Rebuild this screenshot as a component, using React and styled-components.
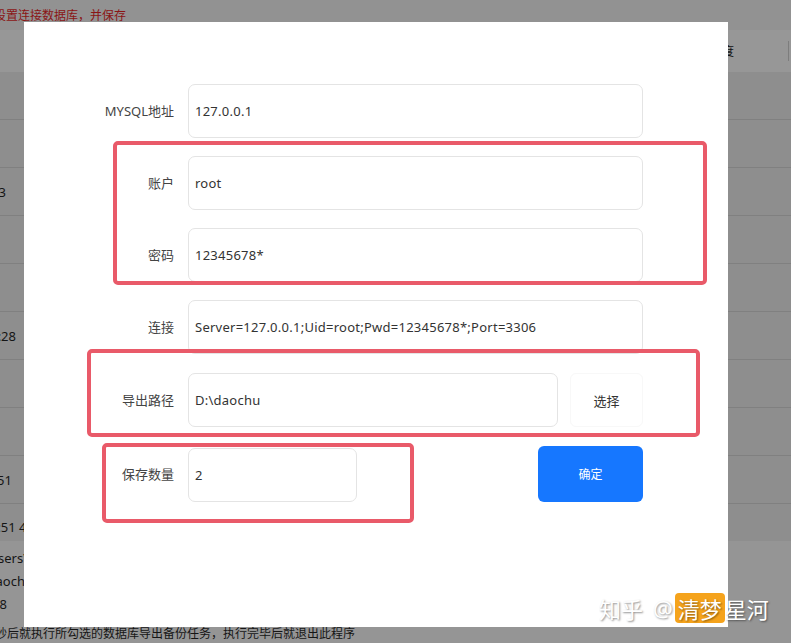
import React from "react";
import styled, { createGlobalStyle } from "styled-components";

const GlobalStyle = createGlobalStyle`
  html, body { margin: 0; padding: 0; }
  body {
    width: 791px;
    height: 643px;
    overflow: hidden;
    background: #8e8e8e;
    font-family: "Noto Sans", "Noto Sans CJK SC", sans-serif;
  }
`;

const Page = styled.div`
  position: relative;
  width: 791px;
  height: 643px;
  overflow: hidden;
  background: #8e8e8e;
  color: #151515;
  font-family: "Noto Sans", "Noto Sans CJK SC", sans-serif;
`;

const TopBar = styled.div`
  height: 30px;
  background: #929292;
  display: flex;
  align-items: center;
  font-size: 12px;
  color: #8a1515;
  span { margin-left: -6px; }
`;

const TableHeader = styled.div`
  height: 42px;
  background: #979797;
  display: flex;
  align-items: center;
  justify-content: flex-end;
  font-size: 12px;
  color: #111;
`;

const HeaderCell = styled.div`
  margin-right: 54px;
`;

const HeaderDivider = styled.div`
  width: 1px;
  height: 20px;
  background: #7d7d7d;
  margin-right: 2px;
`;

const Row = styled.div`
  height: ${(p) => p.$h || 48}px;
  box-sizing: border-box;
  border-bottom: ${(p) => (p.$noLine ? "none" : "1px solid #808080")};
  display: flex;
  align-items: center;
  padding-top: ${(p) => p.$pt || 0}px;
  font-size: 13px;
  background: #8e8e8e;
`;

const ClipCell = styled.div`
  width: ${(p) => p.$end}px;
  display: flex;
  justify-content: flex-end;
  overflow: hidden;
  white-space: nowrap;
  flex: none;
`;

const Lower = styled.div`
  background: #959595;
  display: flex;
  flex-direction: column;
  padding-top: 5px;
  font-size: 13px;
  height: 102px;
`;

const LowerLine = styled.div`
  height: 23px;
  display: flex;
  align-items: center;
`;

const Notice = styled.div`
  font-size: 12px;
  margin-top: 9px;
  color: #151515;
  white-space: nowrap;
  span { margin-left: -5px; }
`;

const Overlay = styled.div`
  position: absolute;
  inset: 0;
  padding: 22px 0 0 24px;
`;

const Modal = styled.div`
  width: 704px;
  height: 605px;
  background: #fff;
  box-sizing: border-box;
  padding: 62px 85px 0 0;
`;

const Form = styled.div`
  display: grid;
  grid-template-columns: 150px 455px;
  column-gap: 14px;
  row-gap: 18px;
`;

const Label = styled.div`
  height: 54px;
  margin-top: ${(p) => p.$mt || 0}px;
  display: flex;
  align-items: center;
  justify-content: flex-end;
  font-size: 13px;
  color: #444;
  padding-bottom: 1px;
  box-sizing: border-box;
`;

const Field = styled.div`
  display: flex;
  align-items: center;
  gap: 12px;
  margin-top: ${(p) => p.$mt || 0}px;
  justify-content: ${(p) => (p.$spread ? "space-between" : "flex-start")};
`;

const Input = styled.div`
  box-sizing: border-box;
  height: 54px;
  width: ${(p) => (p.$w ? `${p.$w}px` : "auto")};
  flex: ${(p) => (p.$w ? "none" : "1")};
  border: 1.5px solid #e4e4e4;
  border-radius: 7px;
  padding-left: 6px;
  display: flex;
  align-items: center;
  font-size: 13px;
  color: #333;
  letter-spacing: 0.25px;
  white-space: nowrap;
  overflow: hidden;
`;

const GhostButton = styled.div`
  box-sizing: border-box;
  width: 73px;
  height: 54px;
  flex: none;
  border: 1px solid #f8f8f8;
  border-radius: 6px;
  display: flex;
  align-items: center;
  justify-content: center;
  font-size: 13px;
  color: #333;
`;

const PrimaryButton = styled.div`
  box-sizing: border-box;
  width: 105px;
  height: 56px;
  flex: none;
  background: #1677ff;
  border-radius: 6px;
  display: flex;
  align-items: center;
  justify-content: center;
  font-size: 12px;
  color: #fff;
  margin-top: -1px;
`;

const Mark = styled.div`
  position: absolute;
  left: ${(p) => p.$x}px;
  top: ${(p) => p.$y}px;
  width: ${(p) => p.$w}px;
  height: ${(p) => p.$h}px;
  box-sizing: border-box;
  border: 4px solid #e95a69;
  border-radius: 5px;
  pointer-events: none;
`;

const Watermark = styled.div`
  position: absolute;
  left: 599px;
  top: 593px;
  display: flex;
  align-items: center;
  font-size: 22px;
  color: #fff;
  font-family: "Noto Sans CJK SC", sans-serif;
  text-shadow: 1px 1px 2px rgba(0, 0, 0, 0.45);
  white-space: nowrap;
  line-height: 30px;
`;

const WmAt = styled.span`
  margin-left: 10px;
  margin-right: 2px;
  font-family: "Noto Sans", sans-serif;
`;

const WmBadge = styled.span`
  background: #f5a31c;
  border-radius: 4px;
  padding: 0 3px;
`;

const rows = [
  { t: "" },
  { t: "" },
  { t: "2023-04-13", end: 6 },
  { t: "" },
  { t: "" },
  { t: "10:28", end: 16 },
  { t: "" },
  { t: "" },
  { t: "10:51", end: 12 },
];

export default function App() {
  return (
    <Page>
      <GlobalStyle />
      <TopBar>
        <span>设置连接数据库，并保存</span>
      </TopBar>
      <TableHeader>
        <HeaderCell>备份进度</HeaderCell>
        <HeaderDivider />
      </TableHeader>
      {rows.map((r, i) => (
        <Row key={i}>
          {r.t && <ClipCell $end={r.end}>{r.t}</ClipCell>}
        </Row>
      ))}
      <Row $h={37} $pt={8} $noLine>
        <ClipCell $end={34}>2023-04-13 10:51 41</ClipCell>
      </Row>
      <Lower>
        <LowerLine>
          <ClipCell $end={28}>C:\Users\</ClipCell>
        </LowerLine>
        <LowerLine>
          <ClipCell $end={33}>D:\daochu</ClipCell>
        </LowerLine>
        <LowerLine>
          <ClipCell $end={7}>8</ClipCell>
        </LowerLine>
        <Notice>
          <span>秒后就执行所勾选的数据库导出备份任务，执行完毕后就退出此程序</span>
        </Notice>
      </Lower>

      <Overlay>
        <Modal>
          <Form>
            <Label>MYSQL地址</Label>
            <Field>
              <Input>127.0.0.1</Input>
            </Field>
            <Label>账户</Label>
            <Field>
              <Input>root</Input>
            </Field>
            <Label>密码</Label>
            <Field>
              <Input>12345678*</Input>
            </Field>
            <Label>连接</Label>
            <Field>
              <Input>Server=127.0.0.1;Uid=root;Pwd=12345678*;Port=3306</Input>
            </Field>
            <Label $mt={1}>导出路径</Label>
            <Field $mt={1}>
              <Input>D:\daochu</Input>
              <GhostButton>选择</GhostButton>
            </Field>
            <Label $mt={2}>保存数量</Label>
            <Field $mt={2} $spread>
              <Input $w={169}>2</Input>
              <PrimaryButton>确定</PrimaryButton>
            </Field>
          </Form>
        </Modal>
      </Overlay>

      <Mark $x={113} $y={141} $w={594} $h={144} />
      <Mark $x={87} $y={349} $w={613} $h={88} />
      <Mark $x={102} $y={443} $w={312} $h={80} />

      <Watermark>
        知乎<WmAt>@</WmAt>
        <WmBadge>清梦</WmBadge>星河
      </Watermark>
    </Page>
  );
}
